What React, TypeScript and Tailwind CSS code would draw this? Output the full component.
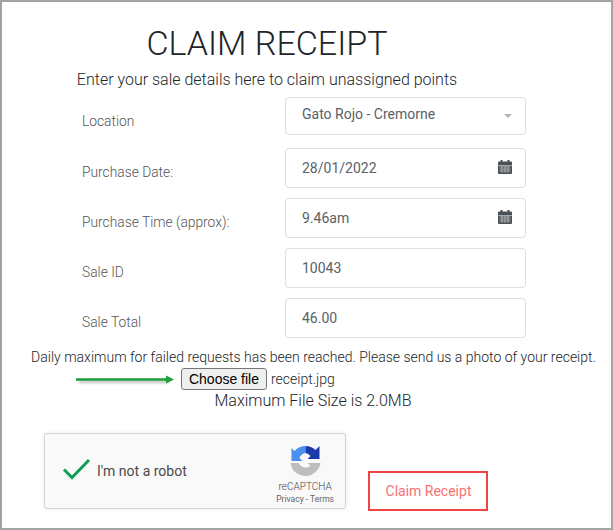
import React from 'react';

const roboto = { fontFamily: 'Roboto, sans-serif' };

const CalendarIcon = () => (
  <svg width="14" height="15" viewBox="0 0 14 15" className="shrink-0 -mt-[3px]">
    <path d="M0 3.500a1 1 0 0 1 1-1h1.500V1h2v1.500h5V1h2v1.500H13a1 1 0 0 1 1 1V6H0z" fill="#495057" />
    <path d="M0 6.500h14V14a1 1 0 0 1-1 1H1a1 1 0 0 1-1-1z" fill="#495057" />
    <path d="M1.500 8h11M1.500 10h11M1.500 12h11M4 7v7M7 7v7M10 7v7" stroke="#c9c9c9" strokeWidth="0.7" />
  </svg>
);

const Row = ({ label, height, children }: { label: string; height: string; children: React.ReactNode }) => (
  <div className="flex items-start">
    <div className="w-[283px] shrink-0 pl-[80px] pt-[14px] whitespace-nowrap text-[13.8px] font-light text-[#555]">{label}</div>
    <div className={`w-[241px] ${height} flex items-center justify-between pl-[16px] pr-[13px] border border-[#dedede] rounded-[4px] text-[14px] text-[#5a6168]`}>
      {children}
    </div>
  </div>
);

const RecaptchaLogo = () => (
  <svg width="31" height="30" viewBox="0 0 30 30">
    <path d="M15 0A15 15 0 0 0 4 5L1 2v13h11l-3-3a8 8 0 0 1 6-5z" fill="#4a90f0" />
    <path d="M15 0a15 15 0 0 1 10 4l4-4v13H17l3-3a8 8 0 0 0-5-3z" fill="#1c3aa9" />
    <path d="M1 17h7a8 8 0 0 0 12 3l-3-3h13a15 15 0 0 1-5 9 15 15 0 0 1-25-9z" fill="#bdbdbd" />
  </svg>
);

export default function App() {
  return (
    <div style={roboto} className="w-[613px] h-[530px] bg-white border-2 border-[#a3a3a3] overflow-hidden text-[#333]">
      <div className="w-[530px] text-center pt-[21px]">
        <h1 className="text-[34px] leading-[40px] font-light text-[#212529]">CLAIM RECEIPT</h1>
        <p className="text-[16px] leading-[24px] mt-[5px] font-light text-[#212529]">Enter your sale details here to claim unassigned points</p>
      </div>

      <div className="flex flex-col gap-[10px] mt-[5px]">
        <div className="mb-[3px]">
          <Row label="Location" height="h-[38px]">
            <span className="-mt-[3px]">Gato Rojo - Cremorne</span>
            <span className="w-0 h-0 border-x-[4px] border-x-transparent border-t-[4px] border-t-[#adb5bd]" />
          </Row>
        </div>
        <Row label="Purchase Date:" height="h-[40px]">
          <span>28/01/2022</span>
          <CalendarIcon />
        </Row>
        <Row label="Purchase Time (approx):" height="h-[40px]">
          <span>9.46am</span>
          <CalendarIcon />
        </Row>
        <Row label="Sale ID" height="h-[40px]">
          <span>10043</span>
        </Row>
        <Row label="Sale Total" height="h-[40px]">
          <span>46.00</span>
        </Row>
      </div>

      <div className="flex flex-col items-center mt-[10px] w-[609px]">
        <p className="text-[14px] leading-[18px] font-light text-[#212529] pl-[14px]">Daily maximum for failed requests has been reached. Please send us a photo of your receipt.</p>
        <div className="relative flex items-center self-start ml-[179px] mt-[2px]">
          <svg width="106" height="16" viewBox="0 0 106 16" className="absolute left-[-106px] top-[4px]">
            <path d="M4 9.500h90" stroke="#000" strokeOpacity="0.25" strokeWidth="3" style={{ filter: 'blur(1.5px)' }} />
            <path d="M1 7.500h92" stroke="#1f9d3a" strokeWidth="2.500" />
            <path d="M91 3.500l8 4-8 4z" fill="#1f9d3a" />
          </svg>
          <button className="h-[22px] w-[86px] bg-[#efefef] border border-[#767676] rounded-[3px] text-[14px] text-black" style={{ fontFamily: 'Liberation Sans, sans-serif' }}>
            Choose file
          </button>
          <span className="text-[14px] font-light ml-[4px] text-[#212529]">receipt.jpg</span>
        </div>
        <p className="text-[16px] leading-[20px] font-light text-[#212529] mt-[1px] pl-[13px]">Maximum File Size is 2.0MB</p>
      </div>

      <div className="flex items-end mt-[22px] ml-[42px]">
        <div className="w-[302px] h-[76px] bg-[#f9f9f9] border border-[#d3d3d3] rounded-[3px] shadow-[0_0_4px_rgba(0,0,0,0.08)] flex items-center pl-[17px] pr-[11px]">
          <svg width="29" height="22" viewBox="0 0 29 22" className="-mt-[5px]">
            <path d="M2 11.500l8 8L27 2" fill="none" stroke="#0f9d58" strokeWidth="3" />
          </svg>
          <span className="ml-[6px] text-[14px] text-[#4a4a4a]">I'm not a robot</span>
          <div className="ml-auto flex flex-col items-center pt-[7px]">
            <RecaptchaLogo />
            <span className="text-[10px] leading-[11px] mt-[5px] font-light text-[#444]">reCAPTCHA</span>
            <span className="text-[8.5px] leading-[10px] mt-[2px] text-[#666]">Privacy - Terms</span>
          </div>
        </div>
        <button className="ml-[22px] -mb-[2px] w-[120px] h-[40px] pl-[1px] border-2 border-[#ef4444] text-[14px] text-[#f87171]">Claim Receipt</button>
      </div>
    </div>
  );
}
